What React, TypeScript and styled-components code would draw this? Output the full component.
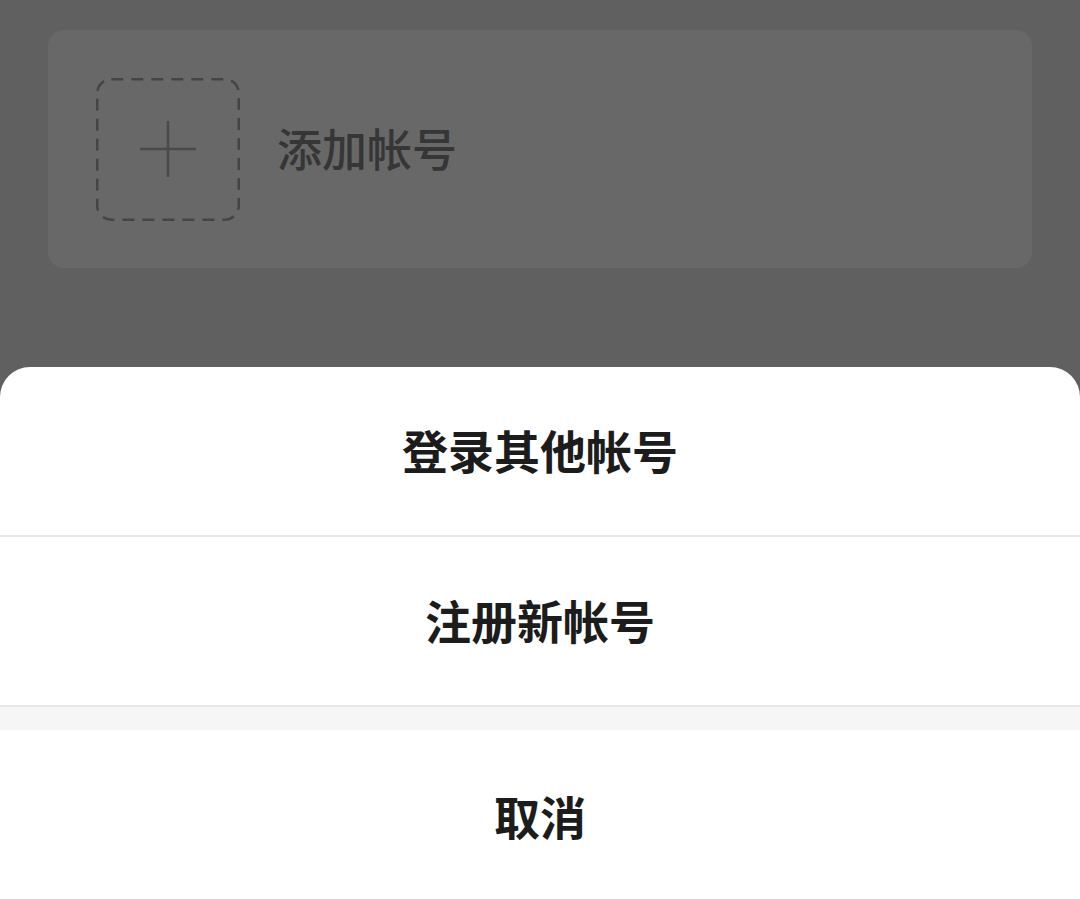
import React from "react";
import styled, { createGlobalStyle } from "styled-components";

const Global = createGlobalStyle`
  html, body { margin: 0; padding: 0; }
  body {
    font-family: "Noto Sans CJK SC", "Noto Sans", sans-serif;
    background: #606060;
  }
  * { box-sizing: border-box; }
`;

const Page = styled.div`
  width: 1080px;
  height: 899px;
  display: flex;
  flex-direction: column;
  background: #606060;
  overflow: hidden;
`;

const Backdrop = styled.div`
  flex: 1;
  padding: 30px 48px 0;
`;

const AddCard = styled.div`
  height: 238px;
  border-radius: 16px;
  background: #686868;
  display: flex;
  align-items: center;
  padding-left: 48px;
  gap: 37px;
`;

const DashedBox = styled.div`
  position: relative;
  width: 144px;
  height: 143px;
  display: flex;
  align-items: center;
  justify-content: center;
`;

const DashFrame = styled.svg`
  position: absolute;
  inset: 0;
`;

const AddLabel = styled.span`
  font-size: 45px;
  font-weight: 500;
  color: #363636;
  line-height: 1;
  margin-top: -3px;
`;

const Sheet = styled.div`
  height: 532px;
  background: #ffffff;
  border-radius: 30px 30px 0 0;
  display: flex;
  flex-direction: column;
`;

const Option = styled.div<{ $h: number; $divider?: boolean }>`
  height: ${(p) => p.$h}px;
  display: flex;
  align-items: center;
  justify-content: center;
  font-size: 46px;
  font-weight: 600;
  color: #1c1c1c;
  border-bottom: ${(p) => (p.$divider ? "2px solid #e6e6e6" : "none")};
  padding-bottom: ${(p) => (p.$divider ? 4 : 0)}px;
`;

const Gap = styled.div`
  height: 23px;
  background: #f6f6f6;
`;

const PlusIcon = () => (
  <svg width="60" height="60" viewBox="0 0 60 60">
    <path d="M2 30 H58 M30 2 V58" stroke="#4a4a4a" strokeWidth="2.6" fill="none" />
  </svg>
);

export default function App() {
  return (
    <Page>
      <Global />
      <Backdrop>
        <AddCard>
          <DashedBox>
            <DashFrame width="144" height="143" viewBox="0 0 144 143">
              <rect
                x="1.25"
                y="1.25"
                width="141.5"
                height="140.5"
                rx="14"
                fill="none"
                stroke="#454545"
                strokeWidth="2.5"
                strokeDasharray="12 8"
              />
            </DashFrame>
            <PlusIcon />
          </DashedBox>
          <AddLabel>添加帐号</AddLabel>
        </AddCard>
      </Backdrop>
      <Sheet>
        <Option $h={170} $divider>登录其他帐号</Option>
        <Option $h={170} $divider>注册新帐号</Option>
        <Gap />
        <Option $h={169}>取消</Option>
      </Sheet>
    </Page>
  );
}
